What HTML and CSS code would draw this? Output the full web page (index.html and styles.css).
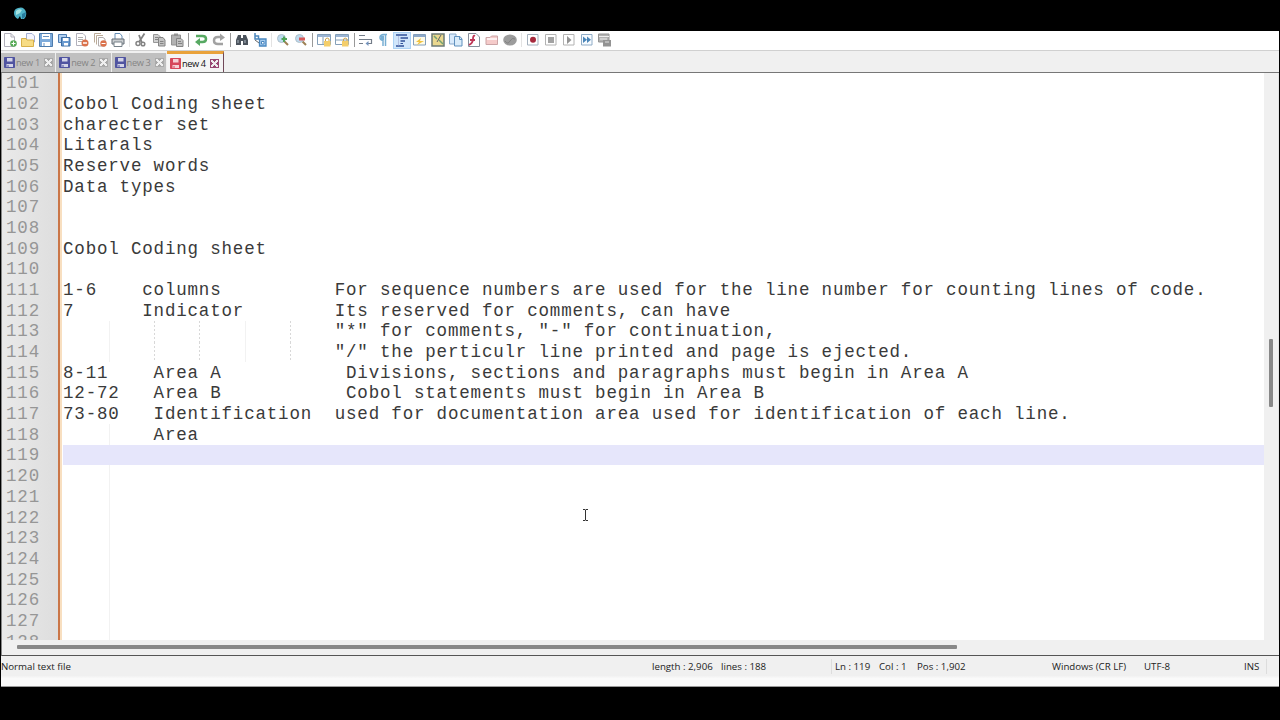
FILE: index.html
```
<!DOCTYPE html>
<html lang="en">
<head>
  <meta charset="UTF-8">
  <title>new 4</title>
  <link rel="stylesheet" href="styles.css">
</head>
<body>

<header class="top">
  <svg width="14" height="14" viewBox="0 0 14 14"><path d="M1 6Q1 2 5 1Q11-1 13 5Q14 9 11 12H8L7 9 5 12Q1 10 1 6Z" fill="#4fb3c8"/><path d="M3 4Q6 1 9 3L7 6 3 8Z" fill="#a5e4e2"/><path d="M9 7L13 5 12 10 9 12Z" fill="#287c9e"/></svg>
</header>

<main class="window">
  <div class="toolbar">
    <svg viewBox="0 0 14 14"><path d="M1.5.5H8L11.5 4V13.5H1.5Z" fill="#fff" stroke="#aaa9b5"/><path d="M8 .5V4H11.5" fill="none" stroke="#aaa9b5"/><circle cx="10.5" cy="10.5" r="3.3" fill="#45a345"/><path d="M8.5 10.500H12.500M10.500 8.500V12.500" stroke="#fff"/></svg>
    <svg viewBox="0 0 14 14"><path d="M5.500.5H11L13.500 3V9H5.500Z" fill="#f4f6ff" stroke="#9ba6d0"/><path d="M.5 5.500H5L6 7H12.500V13.500H.5Z" fill="#f7d978" stroke="#d4a937"/></svg>
    <svg viewBox="0 0 14 14"><path d="M.5.5H13.500V13.500H.5Z" fill="#6fa3d8" stroke="#3b6ea5"/><path d="M3 1H11V6H3ZM3 9H11V13H3Z" fill="#fff"/><path d="M4 3.500H10M5 10V13" stroke="#5586bb"/></svg>
    <svg viewBox="0 0 14 14"><path d="M1.500 1.500H9.500V9.500H1.500Z" fill="#a9caee" stroke="#3d71ab"/><path d="M4.500 4.500H13V13H4.500Z" fill="#5b91cb" stroke="#275d9a"/><path d="M6 5H11.500V8H6ZM7 10H11V12.500H7Z" fill="#fff"/></svg>
    <svg viewBox="0 0 14 14"><path d="M1.500.5H8L10.500 3V12.500H1.500Z" fill="#fff" stroke="#aaa9b5"/><path d="M3 4.500H8M3 6.500H8M3 8.500H7" stroke="#a7a7a7"/><circle cx="10" cy="10" r="3.500" fill="#d66339"/><path d="M8 10H12" stroke="#fff" stroke-width="1.500"/></svg>
    <svg viewBox="0 0 14 14"><path d="M1.500 9.500V.5H8M3.500 11.500V2.500H10" fill="none" stroke="#b5a48f"/><path d="M5.500 4.500H10L12 6V13H5.500Z" fill="#fff" stroke="#a9a4a4"/><circle cx="10.500" cy="10.500" r="3.200" fill="#d66339"/><path d="M8.500 10.500H12.500" stroke="#fff"/></svg>
    <svg viewBox="0 0 14 14"><path d="M4 6V.5H9L11 3V6" fill="#fff" stroke="#5682af"/><path d="M1 6H13V11H1Z" fill="#c4c8cb" stroke="#555f69"/><path d="M3 9H11V13.500H3Z" fill="#fff" stroke="#68747d"/></svg>
    <i></i>
    <svg viewBox="0 0 14 14"><path d="M10.500.5L5 9M5 2L8 10" stroke="#757575" stroke-width="1.800"/><circle cx="4" cy="10.500" r="2" fill="none" stroke="#777" stroke-width="1.500"/><circle cx="9" cy="11" r="1.800" fill="none" stroke="#777" stroke-width="1.500"/></svg>
    <svg viewBox="0 0 14 14"><path d="M1.500 1.500H6L8.500 4V9.500H1.500Z" fill="#ccc" stroke="#8c8c8c"/><path d="M6.500 4.500H11L13 7V13H6.500Z" fill="#bbb" stroke="#777"/><path d="M3 4.500H6M3 6.500H6M8 8.500H11.500M8 10.500H11.500" stroke="#777"/></svg>
    <svg viewBox="0 0 14 14"><path d="M1.500 2H10.500V12H1.500Z" fill="#aaa" stroke="#888"/><path d="M4 .5H8V3H4Z" fill="#888"/><path d="M6.500 5.500H11L13 7.500V13.500H6.500Z" fill="#bbb" stroke="#777"/><path d="M8 8.500H11M8 10.500H12" stroke="#777"/></svg>
    <i class="dark"></i>
    <svg viewBox="0 0 14 14"><path d="M2 3H8.500Q12 3 12 6T8.500 9H4" fill="none" stroke="#45a052" stroke-width="2.500"/><path d="M6 5V13L1 9Z" fill="#45a052"/></svg>
    <svg viewBox="0 0 14 14"><path d="M10 4H6Q2 4 2 7.500T6 11H11" fill="none" stroke="#999" stroke-width="2.500"/><path d="M8 .500L13 4.500 8 8Z" fill="#999"/></svg>
    <i class="dark"></i>
    <svg viewBox="0 0 14 14"><path d="M3 2H6V5H8V2H11L13 7V12H8V8H6V12H1V7Z" fill="#39424c"/><path d="M3 7V10M10 7V10" stroke="#a4afbb"/></svg>
    <svg viewBox="0 0 14 14"><path d="M2 0V6H5.500V3H2" fill="none" stroke="#397bb7" stroke-width="1.500"/><path d="M2 7L6 10" stroke="#555"/><path d="M6.500 6H13V13H6.500Z" fill="#9ac5ec" stroke="#367bb9" stroke-width="1.300"/><path d="M8.500 8.500H11V11H8.500Z" fill="#fff" stroke="#367bb9"/></svg>
    <i></i>
    <svg viewBox="0 0 14 14"><path d="M7 7L12 12" stroke="#927342" stroke-width="2"/><circle cx="5.500" cy="5.500" r="4" fill="#b8d8ee" stroke="#a6b9c5"/><path d="M8 3.500V9M5.500 6H11" stroke="#3c9b46" stroke-width="2"/></svg>
    <svg viewBox="0 0 14 14"><path d="M7 7L12 12" stroke="#927342" stroke-width="2"/><circle cx="5.500" cy="5.500" r="4" fill="#b8d8ee" stroke="#a6b9c5"/><path d="M5 6H11" stroke="#d44848" stroke-width="3"/></svg>
    <i class="dark"></i>
    <svg viewBox="0 0 14 14"><path d="M.5 1.500H13.500V11.500H.5ZM6 2V11" fill="#fff" stroke="#7896b2"/><path d="M1 3H13" stroke="#92add0" stroke-width="2"/><path d="M7 8H13.500V13.500H7Z" fill="#f3c95b"/><path d="M8.500 8V6Q10 4 12 6V8" fill="none" stroke="#c99b38"/></svg>
    <svg viewBox="0 0 14 14"><path d="M.5 1.500H13.500V11.500H.5ZM1 7H13" fill="#fff" stroke="#7896b2"/><path d="M1 3H13" stroke="#92add0" stroke-width="2"/><path d="M7 8H13.500V13.500H7Z" fill="#f3c95b"/><path d="M8.500 8V6Q10 4 12 6V8" fill="none" stroke="#c99b38"/></svg>
    <i class="dark"></i>
    <svg viewBox="0 0 14 14"><path d="M0 2.500H6M0 6.500H12.500V10.500H8M0 10.500H4" fill="none" stroke="#666f7d" stroke-width="1.200"/><path d="M9.500 8V13L6.500 10.500Z" fill="#6689b8"/></svg>
    <svg viewBox="0 0 14 14"><path d="M10 1.500H6Q3 2 3 4.500T6 7.500V13M8.500 2V13" fill="none" stroke="#69a6cf" stroke-width="1.500"/><path d="M4 2.500H7V7H4Z" fill="#69a6cf"/></svg>
    <svg class="active" viewBox="0 0 14 14"><path d="M1 1.500H12M5.500 4.500H13M5.500 7.500H10M1 12.500H9" stroke="#1b3f8f" stroke-width="1.500"/><path d="M3.500 3V12" stroke="#8a8fc0" stroke-dasharray="1 1"/><path d="M5.500 10H8" stroke="#1b3f8f"/></svg>
    <svg viewBox="0 0 14 14"><path d="M.5 1.500H12.500V12H.5Z" fill="#fffbe6" stroke="#7694b4"/><path d="M1 3H12" stroke="#819fc3" stroke-width="2"/><path d="M8 5L3 9H6L4 12 11 8H7Z" fill="#efbd2d"/></svg>
    <svg viewBox="0 0 14 14"><path d="M1 1H13V13H1Z" fill="#e8d483" stroke="#5c6d68" stroke-width="1.500"/><path d="M3 3L6 6M8 7L12 11" fill="none" stroke="#639864" stroke-width="1.500"/><path d="M10 2L6 9" stroke="#555"/></svg>
    <svg viewBox="0 0 14 14"><path d="M.5 1H7V11H.5Z" fill="#d5e8fb" stroke="#7ba0c5"/><path d="M5.500 3.500H11L13 6V13H5.500Z" fill="#d6eafa" stroke="#4f86b7"/><path d="M10.500 4V6.500H13" fill="none" stroke="#4f86b7"/></svg>
    <svg viewBox="0 0 14 14"><path d="M1.500.5H9L12.500 4V13.500H1.500Z" fill="#fff" stroke="#798391"/><path d="M8 3Q6 2 6 6T2 12M3 7H8" fill="none" stroke="#b92346" stroke-width="1.800"/></svg>
    <svg viewBox="0 0 14 14"><path d="M1 4.500H5L6.500 3H12.500V11.500H1Z" fill="#f4c6c5" stroke="#c69b9d"/><path d="M2 6H12" stroke="#fff0f0" stroke-width="2"/></svg>
    <svg viewBox="0 0 14 14"><ellipse cx="7" cy="7" rx="6.800" ry="5.500" fill="#929292"/><path d="M2 8Q5 12 7 8T12 6" fill="none" stroke="#747474"/></svg>
    <i></i>
    <svg viewBox="0 0 14 14"><path d="M1.500 1.500H12V12H1.500Z" fill="#fff" stroke="#9ba9b8"/><circle cx="7" cy="6.700" r="3" fill="#9d1228"/></svg>
    <svg viewBox="0 0 14 14"><path d="M1.500 1.500H12V12H1.500Z" fill="#fff" stroke="#aaa"/><path d="M4 4H10V10H4Z" fill="#999"/></svg>
    <svg viewBox="0 0 14 14"><path d="M1.500 1.500H12V12H1.500Z" fill="#fff" stroke="#aaa"/><path d="M5 3V11L9.500 7Z" fill="#888"/></svg>
    <svg viewBox="0 0 14 14"><path d="M1.500 1.500H12V12H1.500Z" fill="#f7fbff" stroke="#83a4c1"/><path d="M3 3.500V10L7 6.700ZM7 3.500V10L11 6.700Z" fill="#3779b2"/></svg>
    <svg viewBox="0 0 14 14"><path d="M.5 1H11V9H.5Z" fill="#aaa" stroke="#888"/><path d="M1 3.500H11M2 6H9" stroke="#eee"/><path d="M5 7H13V13.500H5Z" fill="#888"/><path d="M7 9H11" stroke="#ddd"/></svg>
  </div>

  <div class="tabs">
    <div class="tab"><svg class="disk" viewBox="0 0 11 11"><use href="#disk"/></svg><span>new 1</span><b class="close"></b></div>
    <div class="tab"><svg class="disk" viewBox="0 0 11 11"><use href="#disk"/></svg><span>new 2</span><b class="close"></b></div>
    <div class="tab"><svg class="disk" viewBox="0 0 11 11"><use href="#disk"/></svg><span>new 3</span><b class="close"></b></div>
    <div class="tab current"><svg class="disk" viewBox="0 0 11 11"><use href="#disk"/></svg><span>new 4</span><b class="close"></b></div>
  </div>

  <div class="editor">
    <pre class="numbers">101
102
103
104
105
106
107
108
109
110
111
112
113
114
115
116
117
118
119
120
121
122
123
124
125
126
127
128</pre>
    <div class="margin"></div>
    <div class="code">
      <pre> </pre>
      <pre>Cobol Coding sheet</pre>
      <pre>charecter set</pre>
      <pre>Litarals</pre>
      <pre>Reserve words</pre>
      <pre>Data types</pre>
      <pre> </pre>
      <pre> </pre>
      <pre>Cobol Coding sheet</pre>
      <pre> </pre>
      <pre>1-6    columns          For sequence numbers are used for the line number for counting lines of code.</pre>
      <pre>7      Indicator        Its reserved for comments, can have</pre>
      <pre class="guides">                        "*" for comments, "-" for continuation,</pre>
      <pre class="guides">                        "/" the perticulr line printed and page is ejected.</pre>
      <pre>8-11    Area A           Divisions, sections and paragraphs must begin in Area A</pre>
      <pre>12-72   Area B           Cobol statements must begin in Area B</pre>
      <pre>73-80   Identification  used for documentation area used for identification of each line.</pre>
      <pre class="guide">        Area</pre>
      <pre class="selected"> </pre>
      <pre class="guide"> </pre>
      <pre class="guide"> </pre>
      <pre class="guide"> </pre>
      <pre class="guide"> </pre>
      <pre class="guide"> </pre>
      <pre class="guide"> </pre>
      <pre class="guide"> </pre>
      <pre class="guide"> </pre>
      <pre class="guide"> </pre>
    </div>
    <div class="vscroll"><div class="thumb"></div></div>
  </div>
  <div class="hscroll"><div class="thumb"></div></div>

  <footer class="status">
    <span class="type">Normal text file</span>
    <span class="length">length : 2,906</span>
    <span class="lines">lines : 188</span>
    <span class="ln">Ln : 119</span>
    <span class="col">Col : 1</span>
    <span class="pos">Pos : 1,902</span>
    <span class="eol">Windows (CR LF)</span>
    <span class="enc">UTF-8</span>
    <span class="ins">INS</span>
  </footer>
</main>

<svg class="cursor" viewBox="0 0 7 12"><path d="M1 .5H3L3.500 1 4 .5H6M3.500 1V11M1 11.500H3L3.500 11 4 11.500H6" fill="none" stroke="#333"/></svg>

<svg class="defs">
  <symbol id="disk" viewBox="0 0 11 11"><path d="M.5.5H10.500V10.500H.5Z" fill="currentColor" stroke="currentColor"/><path d="M3 1H8.500V4.500H3ZM2.500 7H9V10H2.500Z" fill="#fff" opacity=".75"/><path d="M4 8V10" stroke="currentColor"/></symbol>
</svg>

</body>
</html>
```
FILE: styles.css
```
* { box-sizing: border-box; }
body { margin: 0; height: 720px; background: #000; overflow: hidden; font-family: "Open Sans", sans-serif; }
pre { margin: 0; }
.defs { display: none; }

.top { height: 31px; padding: 7px 13px; }
.top svg { display: block; }
.window { width: 1278px; height: 656px; margin-left: 1px; background: #f0f0f0; display: flex; flex-direction: column; border-bottom: 1px solid #999; }

.toolbar { height: 20px; flex: none; display: flex; align-items: center; padding-bottom: 1px; background: #fff; border-bottom: 1px solid #d0d0d0; }
.toolbar svg { width: 18px; height: 14px; padding: 0 2px; flex: none; opacity: .9; }
.toolbar i { width: 5.3px; height: 14px; flex: none; background: linear-gradient(#e3e3e3, #e3e3e3) center / 1px 100% no-repeat; }
.toolbar .dark { background-image: linear-gradient(#999, #999); }
.toolbar .active { height: 17px; background: #cce4fb; outline: 1px solid #a3cef4; outline-offset: -1px; }

.tabs { height: 22px; flex: none; display: flex; align-items: flex-end; border-bottom: 1px solid #777; }
.tab { width: 55.3px; height: 19px; padding-left: 3px; display: flex; align-items: center; background: #c0c0c0; border-right: 1px solid #eee; font-size: 9.2px; color: #858585; }
.tab span { width: 26px; margin-left: 1px; white-space: nowrap; letter-spacing: -.35px; }
.disk { width: 11px; height: 11px; flex: none; color: #5054a0; }
.close { width: 9px; height: 9px; flex: none; margin-left: 2px; border: 1px solid #aaa; background: linear-gradient(45deg, transparent 42%, #eee 42% 58%, transparent 58%), linear-gradient(-45deg, transparent 42%, #eee 42% 58%, transparent 58%), #a6a6a6; }
.current { width: 57px; height: 21px; padding-left: 3px; color: #111; background: #f4f4f4; border-top: 3px solid #e9a23b; border-right-color: #704858; }
.current .disk { color: #d6465a; }
.current .close { border-color: #984873; background-color: #984873; }

.editor { height: 567px; flex: none; display: flex; overflow: hidden; background: #fff; border-left: 1px solid #888; }
.numbers, .code pre { font: 17.5px/20.67px "Liberation Mono", monospace; letter-spacing: .82px; }
.numbers { width: 56px; height: 567px; padding: .4px 0 0 4px; overflow: hidden; color: #969696; background: linear-gradient(90deg, #e9e9e9, #dedede); }
.margin { width: 4px; border-left: 2px solid #ca7648; background: #f8dfc0; }
.code { flex: 1; padding-left: 1px; color: #3a3a3a; overflow: hidden; }
.code pre { height: 20.67px; padding-top: .4px; }
.code .selected { background: #e6e6fb; }
.guides {
  background-image: linear-gradient(#f2f2f2, #f2f2f2), linear-gradient(#d8d8d8 50%, #fff 50%), linear-gradient(#d8d8d8 50%, #fff 50%), linear-gradient(#f2f2f2, #f2f2f2), linear-gradient(#d8d8d8 50%, #fff 50%);
  background-position: 46px 0, 91px 0, 136px 0, 182px 0, 227px 0;
  background-size: 1px 4px;
  background-repeat: repeat-y;
}
.guide { background: linear-gradient(#f2f2f2, #f2f2f2) 46px 0 / 1px 100% no-repeat; }

.vscroll { width: 15px; background: #f0f0f0; padding: 266px 0 0 5px; border-right: 1px solid #e4e4e4; }
.vscroll .thumb { width: 4px; height: 68px; background: #888; border-radius: 1px; }
.hscroll { height: 16px; flex: none; padding: 5px 0 0 15px; border-left: 1px solid #888; border-bottom: 1px solid #555; }
.hscroll .thumb { width: 940px; height: 4px; background: #888; border-radius: 1px; }

.status { flex: 1; display: flex; padding-top: 3px; font-size: 9.7px; line-height: 15px; color: #222; white-space: nowrap; background: linear-gradient(#f0f0f0 65%, #fafafa 75%); }
.status span { height: 15px; }
.type { width: 651px; }
.length { width: 69px; }
.lines { width: 110px; }
.ln { width: 48px; padding-left: 3px; border-left: 1px solid #ddd; }
.col { width: 38px; }
.pos { width: 135px; }
.eol { width: 92px; }
.enc { width: 100px; }
.ins { width: 23px; border-right: 1px solid #ddd; }

/* text pointer over the page */
.cursor { position: absolute; left: 582px; top: 509px; width: 7px; height: 12px; }
```
